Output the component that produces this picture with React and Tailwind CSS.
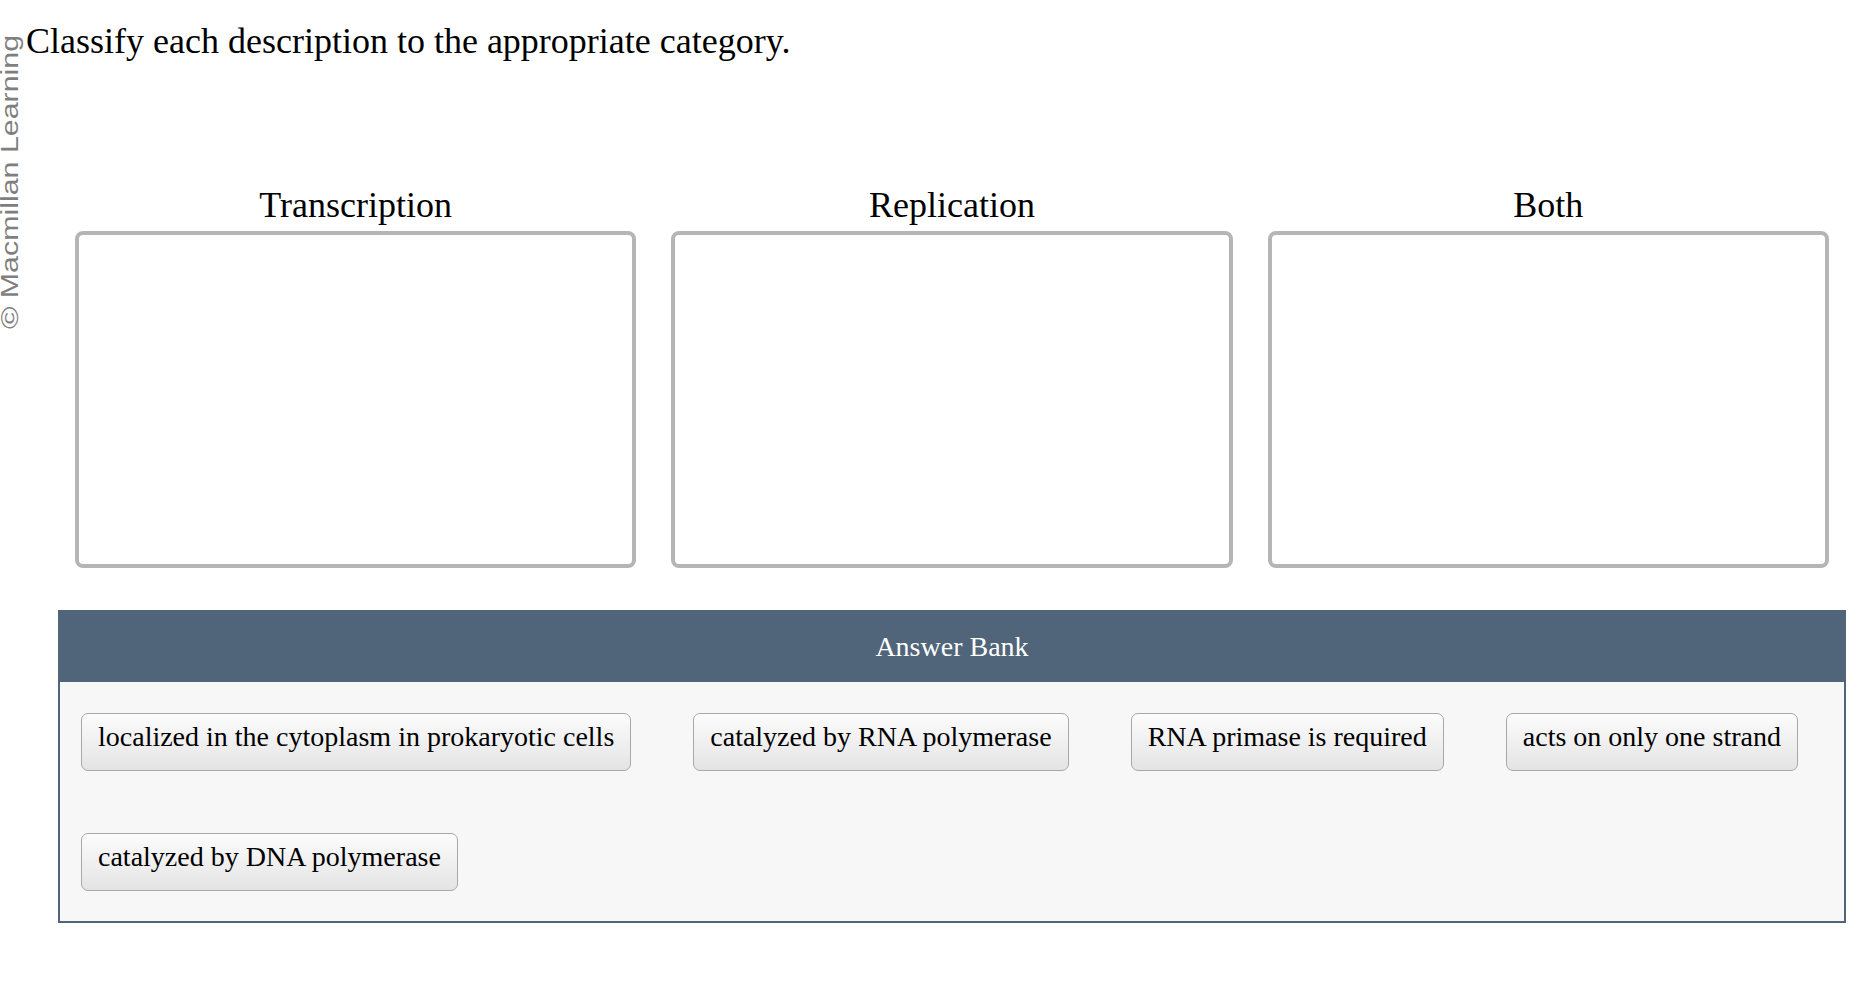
export default function App() {
  const categories = ["Transcription", "Replication", "Both"];
  const answers = [
    "localized in the cytoplasm in prokaryotic cells",
    "catalyzed by RNA polymerase",
    "RNA primase is required",
    "acts on only one strand",
    "catalyzed by DNA polymerase",
  ];
  return (
    <div className="relative min-h-[986px] w-full overflow-hidden bg-white text-black font-['Liberation_Serif','Times_New_Roman',serif]">
      <div
        aria-hidden="true"
        className="absolute left-[-1px] top-[329px] origin-top-left -rotate-90 scale-x-[1.32] whitespace-nowrap font-['Liberation_Sans',Arial,sans-serif] text-[23px] leading-[23px] text-[#7f7f7f]"
      >
        © Macmillan Learning
      </div>

      <h1 className="pl-[26px] pt-[21px] text-[36px] leading-[40px] font-normal">
        Classify each description to the appropriate category.
      </h1>

      <div className="mt-[124px] ml-[75px] grid w-[1754px] grid-cols-3 gap-x-[35px]">
        {categories.map((c) => (
          <div key={c} className="flex flex-col items-center">
            <div className="mb-[6px] text-[36px] leading-[40px]">{c}</div>
            <div className="h-[337px] w-full rounded-[8px] border-4 border-[#b5b5b5] bg-white" />
          </div>
        ))}
      </div>

      <div className="mt-[42px] ml-[58px] w-[1788px] border-2 border-[#50647a]">
        <div className="flex h-[70px] items-center justify-center bg-[#50647a] text-[28px] leading-[32px] text-white">
          Answer Bank
        </div>
        <div className="flex flex-wrap gap-[62px] bg-[#f7f7f7] pl-[21px] pt-[31px] pb-[30px]">
          {answers.map((a) => (
            <div
              key={a}
              className="h-[58px] whitespace-nowrap rounded-[7px] border border-[#a8a8a8] bg-linear-to-b from-[#fcfcfc] to-[#e4e4e4] px-[16px] pt-[7px] text-[28px] leading-[32px]"
            >
              {a}
            </div>
          ))}
        </div>
      </div>
    </div>
  );
}
